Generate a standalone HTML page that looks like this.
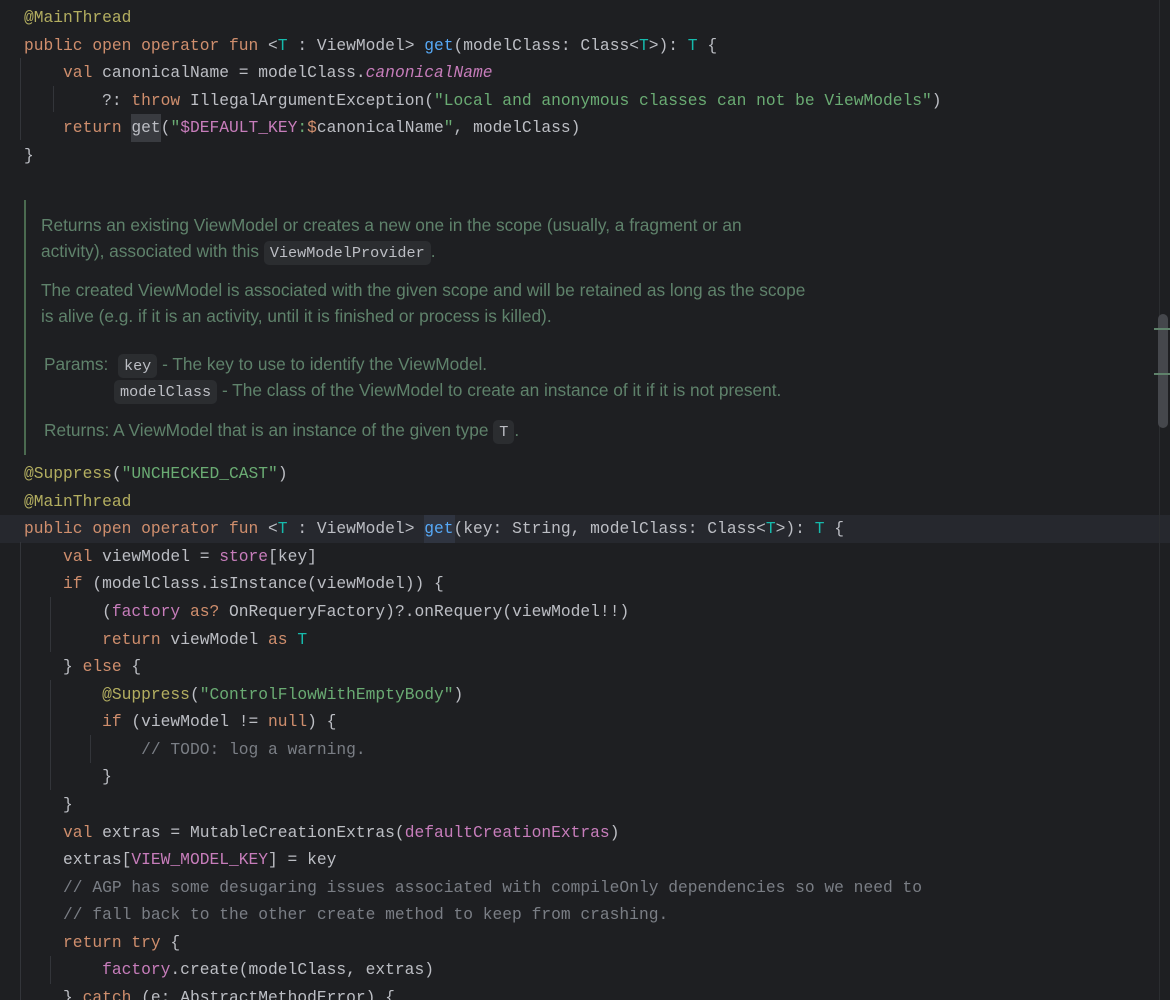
<!DOCTYPE html>
<html><head><meta charset="utf-8"><style>
html,body{margin:0;padding:0;background:#1e1f22;width:1170px;height:1000px;overflow:hidden;position:relative}
.l{position:absolute;left:24px;height:28px;line-height:28px;font-family:"Liberation Mono",monospace;font-size:16.28px;color:#bcbec4;white-space:pre}
.k{color:#cf8e6d}.a{color:#b3ae60}.s{color:#6aab73}.t{color:#16baac}.f{color:#56a8f5}.p{color:#c77dbb}.pi{color:#c77dbb;font-style:italic}.c{color:#7a7e85}
.d{position:absolute;left:41px;font-family:"Liberation Sans",sans-serif;font-size:17.3px;color:#5f826b;white-space:pre;height:26px;line-height:26px}
.ch{font-family:"Liberation Mono",monospace;font-size:15.2px;color:#bcbec4;background:#2b2d30;border-radius:5px;padding:3px 6px}
.g{position:absolute;width:1px;background:#33353a}
</style></head><body>
<div style="position:absolute;left:0;top:515px;width:1170px;height:28px;background:#26282e"></div>
<div style="position:absolute;left:131px;top:114px;width:30px;height:28px;background:#393b40"></div>
<div style="position:absolute;left:424px;top:515px;width:31px;height:28px;background:#2f3440"></div>
<div class="g" style="left:20px;top:58px;height:82px"></div>
<div class="g" style="left:53px;top:86px;height:26px"></div>
<div class="g" style="left:20px;top:542px;height:458px"></div>
<div class="g" style="left:50px;top:597px;height:55px"></div>
<div class="g" style="left:50px;top:680px;height:110px"></div>
<div class="g" style="left:90px;top:735px;height:28px"></div>
<div class="g" style="left:50px;top:956px;height:28px"></div>
<div style="position:absolute;left:1159px;top:0;width:1px;height:1000px;background:#2b2d30"></div>
<div style="position:absolute;left:1158px;top:314px;width:10px;height:114px;background:#45474c;border-radius:5px"></div>
<div style="position:absolute;left:1154px;top:328px;width:16px;height:2px;background:#5f826b"></div>
<div style="position:absolute;left:1154px;top:373px;width:16px;height:2px;background:#5f826b"></div>

<div class="l" style="top:4px"><span class="a">@MainThread</span></div>
<div class="l" style="top:32px"><span class="k">public open operator fun </span>&lt;<span class="t">T</span> : ViewModel&gt; <span class="f">get</span>(modelClass: Class&lt;<span class="t">T</span>&gt;): <span class="t">T</span> {</div>
<div class="l" style="top:59px">    <span class="k">val</span> canonicalName = modelClass.<span class="pi">canonicalName</span></div>
<div class="l" style="top:87px">        ?: <span class="k">throw</span> IllegalArgumentException(<span class="s">"Local and anonymous classes can not be ViewModels"</span>)</div>
<div class="l" style="top:114px">    <span class="k">return</span> get(<span class="s">"</span><span class="p">$DEFAULT_KEY</span><span class="s">:</span><span class="k">$</span>canonicalName<span class="s">"</span>, modelClass)</div>
<div class="l" style="top:142px">}</div>

<div style="position:absolute;left:24px;top:200px;width:2px;height:255px;background:#4b6a50"></div>
<div class="d" style="top:212px">Returns an existing ViewModel or creates a new one in the scope (usually, a fragment or an</div>
<div class="d" style="top:238px">activity), associated with this <span class="ch">ViewModelProvider</span>.</div>
<div class="d" style="top:277px">The created ViewModel is associated with the given scope and will be retained as long as the scope</div>
<div class="d" style="top:303px">is alive (e.g. if it is an activity, until it is finished or process is killed).</div>
<div class="d" style="top:351px;left:44px">Params:  <span class="ch">key</span> - The key to use to identify the ViewModel.</div>
<div class="d" style="top:377px;left:114px"><span class="ch">modelClass</span> - The class of the ViewModel to create an instance of it if it is not present.</div>
<div class="d" style="top:417px;left:44px">Returns: A ViewModel that is an instance of the given type <span class="ch">T</span>.</div>

<div class="l" style="top:460px"><span class="a">@Suppress</span>(<span class="s">"UNCHECKED_CAST"</span>)</div>
<div class="l" style="top:488px"><span class="a">@MainThread</span></div>
<div class="l" style="top:515px"><span class="k">public open operator fun </span>&lt;<span class="t">T</span> : ViewModel&gt; <span class="f">get</span>(key: String, modelClass: Class&lt;<span class="t">T</span>&gt;): <span class="t">T</span> {</div>
<div class="l" style="top:543px">    <span class="k">val</span> viewModel = <span class="p">store</span>[key]</div>
<div class="l" style="top:570px">    <span class="k">if</span> (modelClass.isInstance(viewModel)) {</div>
<div class="l" style="top:598px">        (<span class="p">factory</span> <span class="k">as?</span> OnRequeryFactory)?.onRequery(viewModel!!)</div>
<div class="l" style="top:626px">        <span class="k">return</span> viewModel <span class="k">as</span> <span class="t">T</span></div>
<div class="l" style="top:653px">    } <span class="k">else</span> {</div>
<div class="l" style="top:681px">        <span class="a">@Suppress</span>(<span class="s">"ControlFlowWithEmptyBody"</span>)</div>
<div class="l" style="top:708px">        <span class="k">if</span> (viewModel != <span class="k">null</span>) {</div>
<div class="l" style="top:736px">            <span class="c">// TODO: log a warning.</span></div>
<div class="l" style="top:763px">        }</div>
<div class="l" style="top:791px">    }</div>
<div class="l" style="top:819px">    <span class="k">val</span> extras = MutableCreationExtras(<span class="p">defaultCreationExtras</span>)</div>
<div class="l" style="top:846px">    extras[<span class="p">VIEW_MODEL_KEY</span>] = key</div>
<div class="l" style="top:874px">    <span class="c">// AGP has some desugaring issues associated with compileOnly dependencies so we need to</span></div>
<div class="l" style="top:901px">    <span class="c">// fall back to the other create method to keep from crashing.</span></div>
<div class="l" style="top:929px">    <span class="k">return try</span> {</div>
<div class="l" style="top:956px">        <span class="p">factory</span>.create(modelClass, extras)</div>
<div class="l" style="top:984px">    } <span class="k">catch</span> (e: AbstractMethodError) {</div>
</body></html>
